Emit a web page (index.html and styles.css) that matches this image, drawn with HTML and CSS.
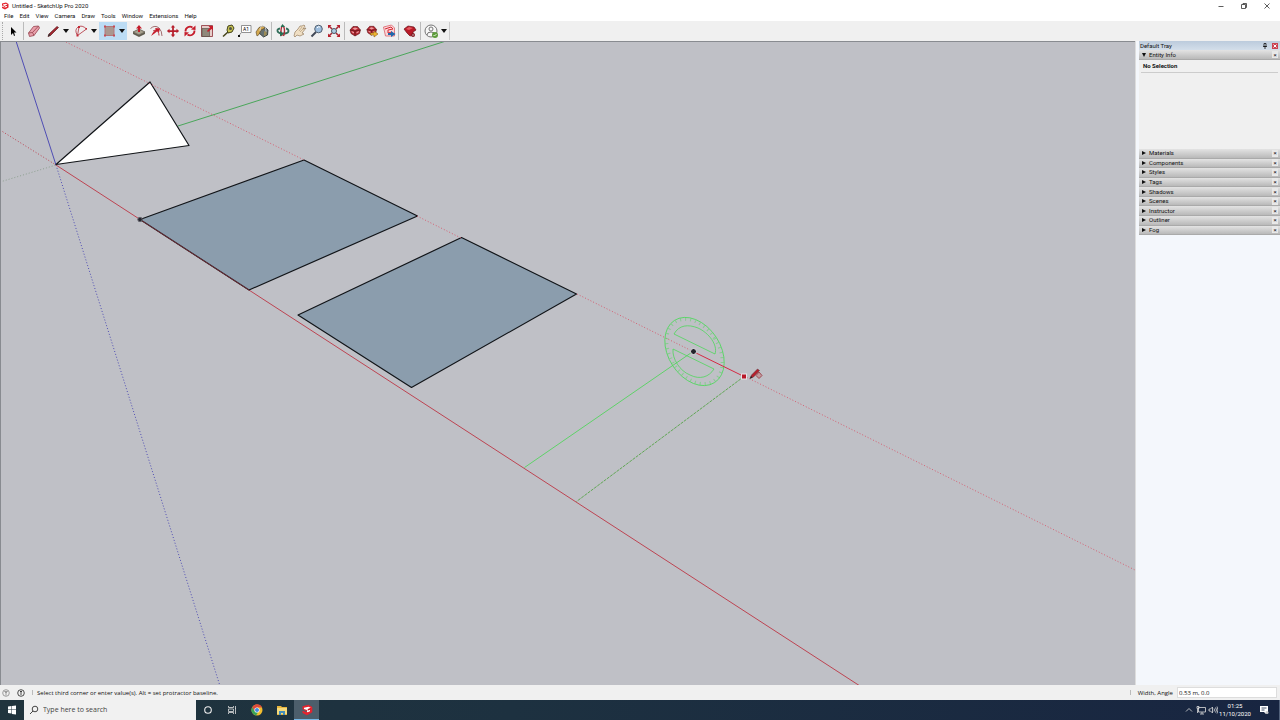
FILE: index.html
```html
<!DOCTYPE html>
<html lang="en">
<head>
    <meta charset="utf-8">
    <title>Untitled - SketchUp Pro 2020</title>
    <link rel="stylesheet" href="styles.css">
</head>
<body>
    <!-- shared icons -->
    <svg class="defs" width="0" height="0">
        <symbol id="logo" viewBox="0 0 16 16">
            <path fill="#e5232e" d="M2 3l8-2 5 3v7l-7 4-6-3v-3l5 2 1-1-6-3z"/>
            <path fill="#fff" d="M4 5l6-1.500 3 1.500-4 1.500v2l3-1v2l-3 1.500-1-.5V8L4 6.500z"/>
            <path fill="#b3131e" d="M9 7.500l4-2v1l-4 2z"/>
        </symbol>
        <symbol id="gem" viewBox="0 0 14 14">
            <path fill="#b32630" stroke="#5b1116" stroke-width=".6" d="M2 6l3-3.500h4.500L12.500 6l-1 3.500L7 12l-4-2.500z"/>
            <path fill="#ef9a9e" d="M4.500 4.500l2.500-1 3 1-3 1.500zM3.500 7l2.500 1v1.500L4 8.500zM11 7L8.500 8v1.500l2-1z"/>
            <path fill="none" stroke="#4b1014" stroke-width=".6" d="M2 6l5 1 5.500-1M7 7v5"/>
        </symbol>
    </svg>

    <div class="app">
        <header class="titlebar">
            <svg class="app-icon"><use href="#logo"/></svg>
            <h1>Untitled - SketchUp Pro 2020</h1>
            <div class="window-buttons">
                <button aria-label="Minimize"><svg viewBox="0 0 8 8"><path d="M1.500 4.500h5"/></svg></button>
                <button aria-label="Restore"><svg viewBox="0 0 8 8"><path d="M1.500 2.500h4v4h-4zM3 2.500v-1h3.500v4h-1"/></svg></button>
                <button aria-label="Close"><svg viewBox="0 0 8 8"><path d="M1.500 1.500l5 5m0-5l-5 5"/></svg></button>
            </div>
        </header>

        <nav class="menubar">
            <button>File</button>
            <button>Edit</button>
            <button>View</button>
            <button>Camera</button>
            <button>Draw</button>
            <button>Tools</button>
            <button>Window</button>
            <button>Extensions</button>
            <button>Help</button>
        </nav>

        <div class="toolbar">
            <div class="group grip">
                <button aria-label="Select"><svg viewBox="0 0 14 14"><path d="M5 3v8l2-2 1 3 1-.5-1-3h2.500z" fill="#000"/></svg></button>
            </div>
            <div class="group line">
                <button aria-label="Eraser"><svg viewBox="0 0 14 14"><path d="M1.500 9l5-6.500 5-.5 1 2-5.500 7.500-4.500 1z" fill="#e9a0ab" stroke="#95414d" stroke-width=".8"/><path d="M1.500 9l4-.5 1.500 3M5.500 8.500L11.500 2" fill="none" stroke="#95414d" stroke-width=".8"/></svg></button>
            </div>
            <div class="group">
                <button aria-label="Line"><svg viewBox="0 0 14 14"><path d="M2 12.500l1-2.500 8-7.500 1.500 1-8 8z" fill="#a3252e" stroke="#5e1b20" stroke-width=".7"/><path d="M2 12.500l1-3 1.500 2z" fill="#333"/></svg></button>
                <button class="caret" aria-label="Line options"></button>
            </div>
            <div class="group">
                <button aria-label="Arc"><svg viewBox="0 0 14 14"><path d="M3.500 11.500Q0 6 4 3q4-2.500 8.500 2zM3.500 11.500L5 3" fill="none" stroke="#b8434d" stroke-width=".9"/><path d="M2.500 10.500h2v2h-2zM4 2h2v2H4zM11.500 4H13v1.500h-1.500z" fill="#c32a35"/></svg></button>
                <button class="caret" aria-label="Arc options"></button>
            </div>
            <div class="group active">
                <button aria-label="Rotated Rectangle" aria-pressed="true"><svg viewBox="0 0 14 14"><path d="M3 2.500h9v9H3z" fill="#aa9790" stroke="#b4767a"/><path d="M2 1.500h2v2H2zM11 1.500h2v2h-2zM2 10.500h2v2H2zM11 10.500h2v2h-2z" fill="#c44b55"/></svg></button>
                <button class="caret" aria-label="Shape options"></button>
            </div>
            <div class="group wide">
                <button aria-label="Push/Pull"><svg viewBox="0 0 14 14"><path d="M1 8l6-3 6 3-6 3z" fill="#a8a18e" stroke="#514c40" stroke-width=".7"/><path d="M1 8v2l6 3 6-3V8l-6 3z" fill="#625d50"/><path d="M7 1l3 3.500H8V8H6V4.500H4z" fill="#c51c2a"/></svg></button>
                <button aria-label="Offset"><svg viewBox="0 0 14 14"><path d="M1.500 4.500Q6 .5 10 4q3 3 3 8" fill="none" stroke="#8d4a4d" stroke-width=".8"/><path d="M4 7q3-2.500 5 .5 1 2 1 4" fill="none" stroke="#b02530" stroke-width=".9"/><path d="M2 12l2-3.500 3-3L6 4l5 .5-1 4-1.500-1.500-3 2.500z" fill="#c51c2a"/></svg></button>
                <button aria-label="Move"><svg viewBox="-1 -1 16 16"><path d="M7 0l2.500 3H8v3h3V4.500L14 7l-3 2.500V8H8v3h1.500L7 14l-2.500-3H6V8H3v1.500L0 7l3-2.500V6h3V3H4.500z" fill="#b71f2c"/></svg></button>
                <button aria-label="Rotate"><svg viewBox="0 0 14 14"><path d="M2.500 7.500A4.500 4.500 0 0 1 9.500 3.500M11.500 6.500A4.500 4.500 0 0 1 4.500 10.500" fill="none" stroke="#c51c2a" stroke-width="1.800"/><path d="M8 5.500l4.500.5V1.500zM6 8.500L1.500 8v4.500z" fill="#c51c2a"/></svg></button>
                <button aria-label="Scale"><svg viewBox="0 0 14 14"><path d="M1.500 1.500h11v11h-11z" fill="#e6cdc9" stroke="#8d3037" stroke-width=".8"/><path d="M2 4.500h7.500v8H2z" fill="#8f887a" stroke="#4d493f" stroke-width=".6"/><path d="M7 7l3-3.500-1.500-1.500h4.500v4.500L11.500 5 8 8z" fill="#c51c2a"/></svg></button>
            </div>
            <div class="group">
                <button aria-label="Tape Measure"><svg viewBox="0 0 14 14"><path d="M6 6l1-4 4-1 2 3-2 4-4 1z" fill="#c9c452" stroke="#45431a"/><path d="M7 8l-5 4.500" stroke="#45431a" stroke-width="1.500"/><circle cx="9.500" cy="4.500" r="1.500" fill="#525449"/></svg></button>
                <button aria-label="Text"><svg viewBox="0 0 14 14"><path d="M3.500 1.500h9.500v7H3.500zM3 9l-2 2.500" fill="#fff" stroke="#777" stroke-width=".8"/><text x="5" y="7" font-size="5">A1</text><path d="M0 11h2v2H0z" fill="#111"/></svg></button>
                <button aria-label="Paint Bucket"><svg viewBox="0 0 14 14"><path d="M4 4l5-1.500 4 3.500-.5 5-4 2-4.500-4z" fill="#66706f" stroke="#262d2d" stroke-width=".8"/><path d="M1 8l3-4.500L8 2l2 2-4 2-2 4.500-2 1.500z" fill="#d4a950" stroke="#544221" stroke-width=".6"/><path d="M5 7q0-5 3-5t3 6" fill="none" stroke="#e2e2e2" stroke-width=".8"/><path d="M9 7l2.500 1v3L9 12z" fill="#9c8b55"/></svg></button>
            </div>
            <div class="group line spread">
                <button aria-label="Orbit"><svg viewBox="0 0 14 14"><path d="M4 4.500Q1 5 1.500 7t4 2.500H9q3.500-.5 3.500-2.500T10 4.500" fill="none" stroke="#326e5a" stroke-width="1.800"/><path d="M6 2q-2 5 0 10M7.500 2q2 5 0 10" fill="none" stroke="#a82b37" stroke-width="1.400"/><path d="M6.500 0L9 3H4.500zM4 7l3.500 3L4 12.500z" fill="#247052"/></svg></button>
                <button aria-label="Pan"><svg viewBox="0 0 14 14"><path d="M1 12l1-4 3-3 2-3 2 0 2-1 1 1-2 3 3-1-4 5 2 1-4 2-3-1-2 2z" fill="#f0dfc4" stroke="#967e60" stroke-width=".7"/><path d="M6 7l3-4M7 8l4-4" stroke="#aa9370" stroke-width=".6"/></svg></button>
                <button aria-label="Zoom"><svg viewBox="0 0 14 14"><path d="M1.500 12.500L6 8" stroke="#424957" stroke-width="2"/><circle cx="8.500" cy="5" r="3.800" fill="#9dbddd" stroke="#53606f"/><path d="M7 4q1-2 3-1" fill="none" stroke="#fff"/></svg></button>
                <button aria-label="Zoom Extents"><svg viewBox="0 0 14 14"><path d="M2 2l3 3M12 2L9 5M2 12l3-3M12 12L9 9" stroke="#a92836" stroke-width="1.500"/><path d="M1 1h3.500L1 4.500zM13 1v3.500L9.500 1zM1 13V9.500L4.500 13zM13 13H9.500L13 9.500z" fill="#b71f2c"/><circle cx="7" cy="7" r="2.500" fill="#adcde4" stroke="#4a5561"/></svg></button>
            </div>
            <div class="group line">
                <button aria-label="3D Warehouse"><svg><use href="#gem"/></svg></button>
                <button aria-label="Share Model"><svg viewBox="0 0 14 14"><use href="#gem" width="13" height="13"/><path d="M5.500 9H9V7l4 3-4 3v-2H5.500z" fill="#eeb731" stroke="#8c5b16" stroke-width=".6"/></svg></button>
                <button aria-label="Send to LayOut"><svg viewBox="0 0 14 14"><path d="M1.500 3l8-2 3 3v8h-9z" fill="#f9d6d7" stroke="#d9616a" stroke-width=".8"/><path d="M3 5l6-2 2 2-5 1v3l4-1" fill="none" stroke="#d92734"/><path d="M6 9h3V7l4.500 3L9 13v-2H6z" fill="#2068ac"/></svg></button>
            </div>
            <div class="group line spread">
                <button aria-label="Extension Warehouse"><svg viewBox="0 0 14 14"><path d="M1 5l4-3 6 1 2 3-3 2v3l-3 1-3-3z" fill="#b81a27" stroke="#6d1118" stroke-width=".7"/><path d="M3 5l3-2 4 1-4 2z" fill="#e75a61"/><circle cx="10" cy="11" r="2" fill="#841b23"/><circle cx="10" cy="11" r=".7" fill="#ddd"/></svg></button>
            </div>
            <div class="group line end">
                <button aria-label="Account"><svg viewBox="0 0 14 14"><circle cx="7" cy="7" r="6" fill="#f7f7f7" stroke="#666" stroke-width=".9"/><circle cx="7" cy="5" r="2" fill="none" stroke="#666" stroke-width=".9"/><path d="M3 11q0-3 4-3t4 3" fill="none" stroke="#666" stroke-width=".9"/><circle cx="11" cy="11" r="3" fill="#5d9b3b"/><path d="M9.500 11l1 1 2-2" fill="none" stroke="#fff" stroke-width=".8"/></svg></button>
                <button class="caret" aria-label="Account menu"></button>
            </div>
        </div>

        <main class="workspace">
            <div class="viewport">
                <svg class="model" viewBox="1 42 1134 643" preserveAspectRatio="xMinYMin slice">
                    <!-- axes -->
                    <path class="blue" d="M16 41L56 165"/>
                    <path class="blue dotted" d="M56 165L220 686"/>
                    <path class="green" d="M178 126L446 41"/>
                    <path class="grey dotted" d="M0 182L56 165"/>
                    <path class="red dotted" d="M0 130L56 165"/>
                    <path class="red" d="M56 165L860 686"/>

                    <!-- faces -->
                    <path class="face white" d="M56 164.500L150 82l39 63.500z"/>
                    <path class="face" d="M140 219.500L304 160l113.500 56L249 290z"/>
                    <path class="face" d="M298 315l163.500-77.500L576.500 294 411.500 387.500z"/>
                    <path class="red edge" d="M140 219.500L249 290"/>
                    <path class="pink dotted" d="M66 42L304 160M417 216l44 22M577 294l116 57.500M744 376l391 194"/>

                    <!-- rectangle being drawn -->
                    <path class="lime" d="M693 351.500L524.500 467.500"/>
                    <path class="guide" d="M744 376.500L576.500 501.500"/>
                    <g class="protractor">
                        <ellipse cx="694.500" cy="351.500" rx="26" ry="37" transform="rotate(-33 694.500 351.500)"/>
                        <ellipse class="ticks" cx="694.500" cy="351.500" rx="24" ry="35" transform="rotate(-33 694.500 351.500)"/>
                        <path d="M674 334l41 20c3-9-6-21-17-26-10-4-19-3-24 6zM673 349l41 20c-5 8-14 11-24 6-10-4-18-16-17-26z"/>
                    </g>
                    <path class="drag" d="M693 351.500L744 376.500"/>
                    <circle class="point" cx="140" cy="219.500" r="2.200"/>
                    <circle class="point ringed" cx="693.500" cy="351.500" r="3"/>
                    <path d="M741 373.500h6v6h-6z" fill="#e8e2e6"/>
                    <path d="M742 374.500h4v4h-4z" fill="#b91728"/>

                    <!-- cursor -->
                    <path d="M750 378.500l1.500-3.500 6-6 2 1.500-6 6.500z" fill="#b61e2c" stroke="#55333a" stroke-width=".5"/>
                    <path d="M750 378.500l1-2.500 1.500 1.500z" fill="#222"/>
                    <path d="M759 372l3 3.500-3 3-3-3z" fill="#c09a9e" stroke="#a04750"/>
                </svg>
            </div>

            <aside class="tray">
                <div class="tray-title">
                    <h2>Default Tray</h2>
                    <button class="pin" aria-label="Auto hide"><svg viewBox="0 0 6 6"><path d="M2 .5h2v3H2zM1 3.500h4M3 4v2" fill="none" stroke="#111" stroke-width=".8"/></svg></button>
                    <button class="tray-close" aria-label="Close tray"><svg viewBox="0 0 6 6"><path d="M1.500 1.500l3 3m0-3l-3 3" stroke="#fff"/></svg></button>
                </div>
                <div class="panel-head open"><button class="panel">Entity Info</button><button class="x" aria-label="Close Entity Info">×</button></div>
                <div class="entity">
                    <p>No Selection</p>
                </div>
                <div class="panels">
                    <div class="panel-head"><button class="panel">Materials</button><button class="x" aria-label="Close Materials">×</button></div>
                    <div class="panel-head"><button class="panel">Components</button><button class="x" aria-label="Close Components">×</button></div>
                    <div class="panel-head"><button class="panel">Styles</button><button class="x" aria-label="Close Styles">×</button></div>
                    <div class="panel-head"><button class="panel">Tags</button><button class="x" aria-label="Close Tags">×</button></div>
                    <div class="panel-head"><button class="panel">Shadows</button><button class="x" aria-label="Close Shadows">×</button></div>
                    <div class="panel-head"><button class="panel">Scenes</button><button class="x" aria-label="Close Scenes">×</button></div>
                    <div class="panel-head"><button class="panel">Instructor</button><button class="x" aria-label="Close Instructor">×</button></div>
                    <div class="panel-head"><button class="panel">Outliner</button><button class="x" aria-label="Close Outliner">×</button></div>
                    <div class="panel-head"><button class="panel">Fog</button><button class="x" aria-label="Close Fog">×</button></div>
                </div>
            </aside>
        </main>

        <footer class="statusbar">
            <svg class="status-icon dim" viewBox="0 0 8 8"><circle cx="4" cy="4" r="3.300"/><path d="M4 6.500V4L2.500 2.500h3L4 4"/></svg>
            <svg class="status-icon" viewBox="0 0 8 8"><circle cx="4" cy="4" r="3.300"/><path d="M4 6V2M3 3l1-1 1 1"/></svg>
            <span class="divider"></span>
            <p>Select third corner or enter value(s). Alt = set protractor baseline.</p>
            <span class="divider"></span>
            <label for="measure">Width, Angle</label>
            <input type="text" id="measure" value="0.53 m, 0.0">
        </footer>

        <div class="taskbar">
            <button class="task" aria-label="Start"><svg viewBox="0 0 10 10"><path fill="#fff" d="M1 1.500l3.500-.5v3.500H1zM5 1l4-.5v4H5zM1 5h3.500v3.500L1 8zM5 5h4v4.500L5 9z"/></svg></button>
            <div class="search">
                <svg viewBox="0 0 10 10"><circle cx="6" cy="4" r="2.800"/><path d="M4 6L1 9"/></svg>
                <input type="text" placeholder="Type here to search" aria-label="Type here to search">
            </div>
            <button class="task" aria-label="Cortana"><svg viewBox="0 0 10 10"><circle cx="5" cy="5" r="3.300" fill="none" stroke="#eee" stroke-width="1.100"/></svg></button>
            <button class="task" aria-label="Task View"><svg viewBox="0 0 10 10"><path d="M1.500 1v1.500h5V1M1.500 9V7.500h5V9M1.500 4h5v2.500h-5zM8.500 1v8M8 3.500h1" fill="none" stroke="#ddd" stroke-width=".8"/></svg></button>
            <button class="task big" aria-label="Chrome"><svg viewBox="0 0 12 12"><circle cx="6" cy="6" r="5.500" fill="#f2bd2f"/><path fill="#de4a3b" d="M1.200 3.200A5.500 5.500 0 0 1 11 3.500H6L3.500 7z"/><path fill="#39a457" d="M1.200 3.200L4 7.500l3 1-2 3A5.500 5.500 0 0 1 1.200 3.200z"/><circle cx="6" cy="6" r="2.600" fill="#fff"/><circle cx="6" cy="6" r="2" fill="#4388e0"/></svg></button>
            <button class="task big" aria-label="File Explorer"><svg viewBox="0 0 12 12"><path d="M1 2h4l1 1h5v8H1z" fill="#e7b53d"/><path d="M1 4h10v6H1z" fill="#f7db7c"/><path d="M3 7h6v4H7V9H5v2H3z" fill="#458dba"/></svg></button>
            <button class="task big current" aria-label="SketchUp"><svg><use href="#logo"/></svg></button>

            <div class="notify">
                <svg viewBox="0 0 10 10"><path d="M2 6.500l3-3 3 3"/></svg>
                <svg viewBox="0 0 10 10"><path d="M2.500 2.500h7v4.500h-7zM4 9h4M6 7v2M1 1.500h2v2H1zM1.500 4v4"/></svg>
                <svg viewBox="0 0 10 10"><path d="M1 4h1.500L4.500 2v6l-2-2H1zM6 3.500q1 1.500 0 3M7.500 2.500q2 2.500 0 5M9 1.500q2 3.500 0 7"/></svg>
                <div class="clock"><time>01:25</time><time>11/10/2020</time></div>
                <button class="task" aria-label="Notifications"><svg viewBox="0 0 10 10"><path d="M1 1h8v6H7v2L5 7H1z" fill="#fff"/><path d="M2.500 3h5M2.500 5h3" stroke="#1b2944" stroke-width=".8"/><circle cx="8" cy="7.500" r="1.500" fill="#ccc"/></svg></button>
            </div>
        </div>
    </div>
</body>
</html>
```
FILE: styles.css
```css
* { box-sizing: border-box; }
body { margin: 0; font-family: Roboto, "Noto Sans", sans-serif; font-size: 6px; line-height: 8px; color: #111; }
h1, h2, p { margin: 0; font-size: 6px; font-weight: normal; }
button { border: none; background: none; padding: 0; margin: 0; font: inherit; color: inherit; }
input { font: inherit; color: inherit; border: none; padding: 0; min-width: 0; }
svg { display: block; }
.defs { position: absolute; }

.app { display: flex; flex-direction: column; height: 100vh; background: #f0f0f0; }

/* title and menu */
.titlebar { display: flex; align-items: center; height: 11px; padding: 0 2px 0 1px; background: #fff; }
.app-icon { width: 8px; height: 8px; margin-right: 3px; }
.window-buttons { display: flex; margin-left: auto; }
.window-buttons button { width: 23px; height: 11px; display: flex; align-items: center; justify-content: center; }
.window-buttons svg { width: 8px; height: 8px; fill: none; stroke: #333; stroke-width: 0.8; }
.menubar { display: flex; align-items: center; gap: 6px; height: 10px; padding-left: 4px; background: #fff; }

/* toolbar */
.toolbar { display: flex; align-items: center; height: 20px; padding-left: 2px; }
.group { display: flex; align-items: center; height: 18px; padding: 0 1px; }
.group button { width: 17px; height: 17px; display: flex; align-items: center; justify-content: center; }
.group svg { width: 14px; height: 14px; }
.group button.caret { width: 9px; }
.caret::after { content: ""; border: 3px solid transparent; border-top: 4px solid #111; border-bottom: 0; }
.grip { border-left: 1px dotted #aaa; margin-right: 1px; }
.line { border-left: 1px solid #bbb; }
.active { background: #bcdcf4; }
.wide { padding: 0 3px; }
.spread { padding: 0 2px; }
.end { border-right: 1px solid #ccc; }

/* drawing area */
.workspace { flex: 1; display: flex; min-height: 0; }
.viewport { flex: 1; min-width: 0; border: 1px solid #888b90; border-width: 1px 0 0 1px; background: #bfc0c6; overflow: hidden; }
.model { width: 100%; height: 100%; fill: none; }
.blue { stroke: #4f4db4; }
.green { stroke: #4aa65a; }
.red { stroke: #bd4452; }
.grey { stroke: #8ea091; }
.pink { stroke: #d65f72; }
.lime { stroke: #5fd269; }
.guide { stroke: #5fa653; stroke-dasharray: 3 1; }
.drag { stroke: #d52a45; }
.dotted { stroke-dasharray: 1 2; }
.edge { stroke-width: 0.5; }
.face { fill: #8b9dad; stroke: #111418; stroke-width: 1.2; stroke-linejoin: round; }
.face.white { fill: #fff; }
.protractor { stroke: #4fd75c; stroke-width: 0.8; }
.ticks { stroke-width: 3; stroke-dasharray: 1 4; opacity: 0.5; }
.point { fill: #24242c; stroke: #62626a; }
.ringed { stroke: #e4e4e8; }

/* tray */
.tray { width: 145px; padding-left: 3px; background: #f4f7fc; border-left: 1px solid #ddd; }
.tray-title { display: flex; align-items: center; height: 9px; padding: 0 2px 0 1px; gap: 4px; background: linear-gradient(#bccbdc, #d3deea); }
.tray-title h2 { flex: 1; }
.tray-title svg { width: 6px; height: 6px; }
.tray-close { background: #cb4252; }
.panel-head { display: flex; align-items: center; background: linear-gradient(#e3e3e3, #b9b9b9); border-bottom: 1px solid #aaa; }
.panel-head.open { height: 10px; }
.panel { flex: 1; display: flex; align-items: center; gap: 3px; padding-left: 3px; line-height: 8px; }
.panel::before { content: ""; border: 2px solid transparent; border-left: 4px solid #111; border-right: 0; }
.open .panel::before { border: 2px solid transparent; border-top: 4px solid #111; border-bottom: 0; }
.x { width: 6px; height: 7px; margin-right: 2px; background: #e8e8e8; line-height: 6px; }
.entity { height: 89px; padding: 2px; background: #f0f0f0; }
.entity p { padding-left: 2px; padding-bottom: 2px; font-weight: bold; border-bottom: 1px solid #ccc; }
.panels { display: flex; flex-direction: column; height: 86px; }
.panels .panel-head { flex: 1; min-height: 0; }

/* status bar */
.statusbar { display: flex; align-items: center; height: 15px; padding: 0 3px 0 2px; gap: 7px; }
.statusbar p { flex: 1; margin-left: -3px; font-family: "Open Sans", sans-serif; }
.statusbar label, .statusbar input { font-family: "Open Sans", sans-serif; }
.status-icon { width: 8px; height: 8px; fill: none; stroke: #222; stroke-width: 0.8; }
.dim { opacity: 0.5; }
.divider { width: 1px; height: 5px; background: #bbb; }
.statusbar input { width: 100px; height: 11px; padding-left: 1px; margin-left: -3px; background: #fff; border: 1px solid #ddd; }

/* taskbar */
.taskbar { display: flex; height: 20px; background: linear-gradient(90deg, #20343d, #1d3140 40%, #182541); color: #fff; }
.task { width: 24px; height: 20px; display: flex; align-items: center; justify-content: center; }
.task svg { width: 10px; height: 10px; }
.big { width: 25px; }
.big svg { width: 12px; height: 12px; }
.current { background: #4c5e6b; border-bottom: 1px solid #75b8e6; }
.search { display: flex; align-items: center; gap: 4px; width: 172px; padding-left: 5px; background: #f1f1f1; }
.search svg { width: 10px; height: 10px; fill: none; stroke: #333; stroke-width: 0.9; }
.search input { flex: 1; background: none; font-family: "Open Sans", sans-serif; font-size: 7px; }
.search input::placeholder { color: #444; }
.notify { display: flex; align-items: center; gap: 2px; margin-left: auto; padding-right: 3px; border-right: 1px solid #52617a; }
.notify > svg { width: 10px; height: 10px; fill: none; stroke: #ddd; stroke-width: 0.8; }
.clock { display: flex; flex-direction: column; align-items: center; width: 30px; }
```
